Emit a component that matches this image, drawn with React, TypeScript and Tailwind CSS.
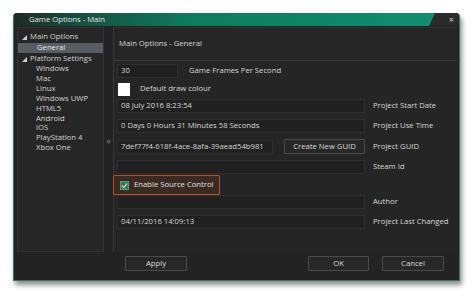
import React from 'react'

const F = { fontFamily: '"Open Sans", "Noto Sans", sans-serif' }

function Tri() {
  return (
    <svg viewBox="0 0 5 5" className="w-[5px] h-[5px] shrink-0 mr-[3px]">
      <path d="M5 0L5 5L0 5Z" fill="#cfcfcf" />
    </svg>
  )
}

function Field({ w, children }: { w: string; children?: React.ReactNode }) {
  return (
    <div className={`${w} h-[14px] shrink-0 flex items-center pl-[3px] bg-[#202020] border border-[#2f2f2f] text-[#d6d6d6] whitespace-nowrap overflow-hidden`}>
      {children}
    </div>
  )
}

function Btn({ w, children }: { w: string; children: React.ReactNode }) {
  return (
    <div className={`${w} h-[15px] flex items-center justify-center bg-[#272727] border border-[#4a4a4a] text-[#dcdcdc] rounded-[1px] whitespace-nowrap`}>
      {children}
    </div>
  )
}

export default function App() {
  const platforms = ['Windows', 'Mac', 'Linux', 'Windows UWP', 'HTML5', 'Android', 'iOS', 'PlayStation 4', 'Xbox One']
  return (
    <div className="w-[474px] h-[294px] bg-white overflow-hidden pt-[13px] pl-[13px] text-[7.7px] leading-none whitespace-nowrap" style={F}>
      <div className="w-[447px] h-[268px] flex flex-col bg-[#232323] border border-t-0 border-[#2f7a5c] rounded-t-[4px] shadow-[2px_4px_5px_rgba(0,0,0,0.45)] overflow-hidden">
        {/* title bar */}
        <div className="h-[13px] shrink-0 flex items-center bg-[linear-gradient(90deg,#1b2a25_0%,#174a3c_12%,#0f7c5e_40%,#119070_100%)] relative">
          <span className="ml-[15px] text-[#e6e6e6]">Game Options - Main</span>
          <div className="absolute right-0 top-0 h-[13px] w-[30px] bg-[#2a2a2a] [clip-path:polygon(6px_0,100%_0,100%_100%,0_100%)] flex items-center justify-end pr-[5px] text-[#cfcfcf] text-[9px]">×</div>
        </div>

        {/* body */}
        <div className="flex h-[226px] shrink-0 pl-[3px] pt-[1px] pr-[2px]">
          {/* tree */}
          <div className="w-[87px] h-full bg-[#262626] border border-[#333] pt-[4px] text-[#d4d4d4]">
            <div className="h-[10px] flex items-center pl-[4px]"><Tri />Main Options</div>
            <div className="h-[10px] flex items-center pl-[19px] bg-[#575d63] text-[#e8e8e8] mt-[1px]">General</div>
            <div className="h-[10px] flex items-center pl-[4px] mt-[1px]"><Tri />Platform Settings</div>
            {platforms.map((p) => (
              <div key={p} className="h-[9.9px] flex items-center pl-[18px]">{p}</div>
            ))}
          </div>

          {/* gutter */}
          <div className="w-[9px] h-full flex items-center justify-center text-[#8a8a8a] text-[9px] pt-[2px]">«</div>

          {/* right panel */}
          <div className="flex-1 h-full flex flex-col border-l border-[#383838]">
            <div className="h-[33px] shrink-0 flex items-center pl-[5px] text-[#d8d8d8] bg-[#262626] border-t border-[#333]">Main Options - General</div>
            <div className="flex-1 flex flex-col bg-[#252525] border-t border-[#3a3a3a] pl-[3px] text-[#d6d6d6]">
              <div className="flex items-center mt-[3px]">
                <Field w="w-[61px]">30</Field>
                <span className="ml-[11px]">Game Frames Per Second</span>
              </div>
              <div className="flex items-center mt-[4px] h-[14px]">
                <div className="w-[12px] h-[13px] bg-white ml-[1px]" />
                <span className="ml-[10px]">Default draw colour</span>
              </div>
              <div className="flex items-center mt-[3px]">
                <Field w="w-[248px]">08 July 2016 8:23:54</Field>
                <span className="ml-[8px]">Project Start Date</span>
              </div>
              <div className="flex items-center mt-[6px]">
                <Field w="w-[248px]">0 Days 0 Hours 31 Minutes 58 Seconds</Field>
                <span className="ml-[8px]">Project Use Time</span>
              </div>
              <div className="flex items-center mt-[6px]">
                <Field w="w-[156px]">7def77f4-618f-4ace-8afa-39aead54b981</Field>
                <div className="ml-[11px]"><Btn w="w-[81px]">Create New GUID</Btn></div>
                <span className="ml-[8px]">Project GUID</span>
              </div>
              <div className="flex items-center mt-[6px]">
                <Field w="w-[248px]" />
                <span className="ml-[8px]">Steam Id</span>
              </div>
              <div className="mt-[1px] -ml-[4px] w-[107px] h-[20px] flex items-center bg-[#3a2a22] border border-[#b0532a] rounded-[1px]">
                <div className="ml-[6px] w-[9px] h-[9px] bg-[#3a7a58] border border-[#5a9a78] flex items-center justify-center">
                  <svg viewBox="0 0 8 8" className="w-[7px] h-[7px]"><path d="M1 4.2L3.2 6.2L7 1.8" fill="none" stroke="#cfe8d8" strokeWidth="1.2" /></svg>
                </div>
                <span className="ml-[5px] text-[#e0e0e0]">Enable Source Control</span>
              </div>
              <div className="flex items-center">
                <Field w="w-[248px]" />
                <span className="ml-[8px]">Author</span>
              </div>
              <div className="flex items-center mt-[6px]">
                <Field w="w-[248px]">04/11/2016 14:09:13</Field>
                <span className="ml-[8px]">Project Last Changed</span>
              </div>
            </div>
          </div>
        </div>

        {/* footer */}
        <div className="flex-1 flex items-start pt-[4px] pl-[111px]">
          <Btn w="w-[62px]">Apply</Btn>
          <div className="ml-[121px]"><Btn w="w-[61px]">OK</Btn></div>
          <div className="ml-[13px]"><Btn w="w-[62px]">Cancel</Btn></div>
        </div>
      </div>
    </div>
  )
}
